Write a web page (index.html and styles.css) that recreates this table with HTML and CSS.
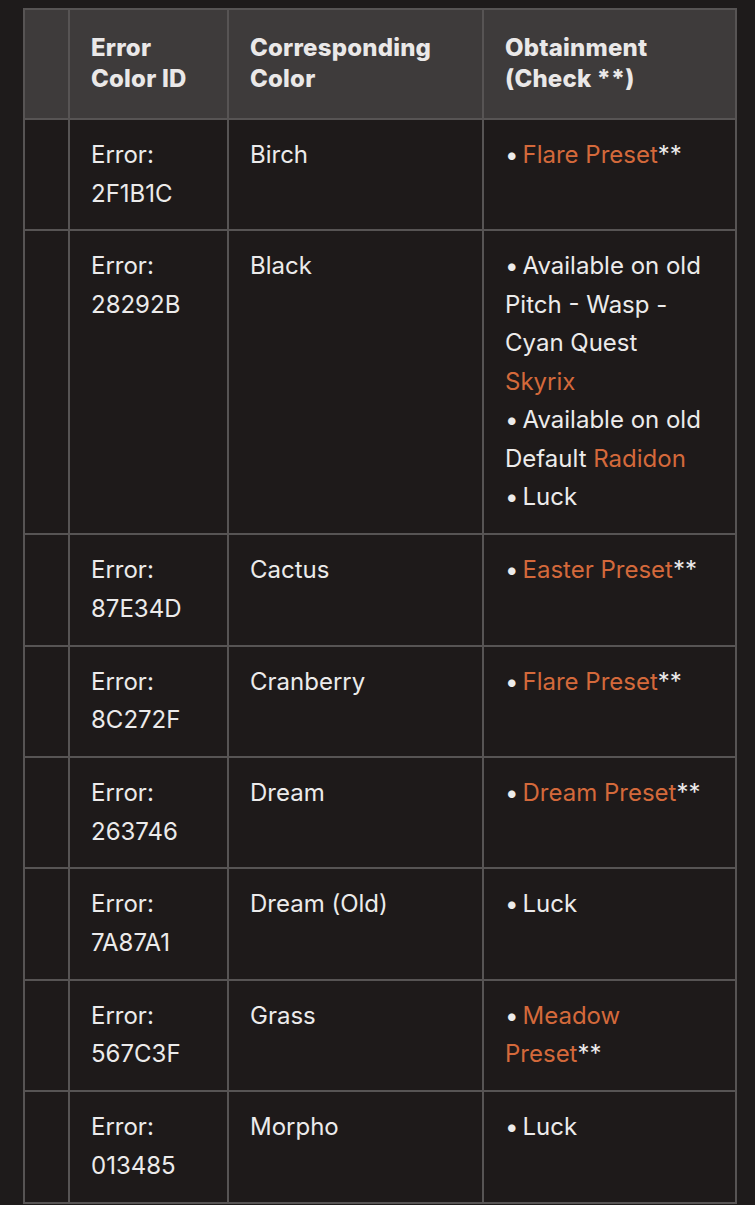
FILE: index.html
```html
<!DOCTYPE html>
<html>
<head>
<meta charset="utf-8">
<link rel="stylesheet" href="styles.css">
</head>
<body>
<table class="tbl">
  <colgroup>
    <col class="c0"><col class="c1"><col class="c2"><col class="c3">
  </colgroup>
  <thead>
    <tr>
      <th></th>
      <th>Error<br>Color ID</th>
      <th>Corresponding<br>Color</th>
      <th>Obtainment<br>(Check **)</th>
    </tr>
  </thead>
  <tbody>
    <tr><td></td><td>Error:<br>2F1B1C</td><td>Birch</td><td><span class="bul">•</span><span class="lnk">Flare Preset</span>**</td></tr>
    <tr><td></td><td>Error:<br>28292B</td><td>Black</td><td><span class="bul">•</span>Available on old Pitch - Wasp - Cyan Quest <span class="lnk">Skyrix</span><br><span class="bul">•</span>Available on old Default <span class="lnk">Radidon</span><br><span class="bul">•</span>Luck</td></tr>
    <tr><td></td><td>Error:<br>87E34D</td><td>Cactus</td><td><span class="bul">•</span><span class="lnk">Easter Preset</span>**</td></tr>
    <tr><td></td><td>Error:<br>8C272F</td><td>Cranberry</td><td><span class="bul">•</span><span class="lnk">Flare Preset</span>**</td></tr>
    <tr><td></td><td>Error:<br>263746</td><td>Dream</td><td><span class="bul">•</span><span class="lnk">Dream Preset</span>**</td></tr>
    <tr><td></td><td>Error:<br>7A87A1</td><td>Dream (Old)</td><td><span class="bul">•</span>Luck</td></tr>
    <tr><td></td><td>Error:<br>567C3F</td><td>Grass</td><td><span class="bul">•</span><span class="lnk">Meadow Preset</span>**</td></tr>
    <tr><td></td><td>Error:<br>013485</td><td>Morpho</td><td><span class="bul">•</span>Luck</td></tr>
  </tbody>
</table>
</body>
</html>
```
FILE: styles.css
```css
html, body {
  margin: 0;
  padding: 0;
  background: #1e1b1b;
}
body {
  padding: 8px 0 0 23px;
  font-family: Inter, "Open Sans", sans-serif;
  color: #ecebeb;
}
.tbl {
  border-collapse: collapse;
  table-layout: fixed;
  width: 712px;
  border: 2px solid #575454;
}
.c0 { width: 45px; }
.c1 { width: 159px; }
.c2 { width: 255px; }
.c3 { width: 253px; }
.tbl th, .tbl td {
  border: 2px solid #575454;
  text-align: left;
  vertical-align: top;
  padding: 16px 21px 16.4px;
}
.tbl th {
  background: #3e3b3b;
  font-weight: 800;
  font-size: 24px;
  line-height: 31px;
  padding: 22px 21px 24px;
  color: #eae8e8;
  letter-spacing: 0.2px;
}
.tbl td {
  background: #1e1a1a;
  font-size: 24px;
  line-height: 38.5px;
}
.bul {
  margin-right: 4px;
}
.lnk {
  color: #d4693b;
}
```
